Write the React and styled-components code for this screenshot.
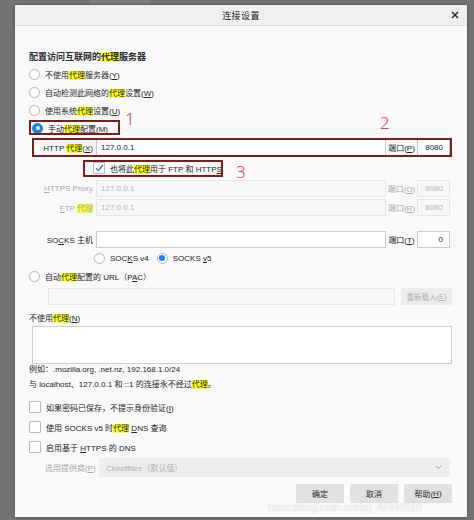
import styled, { createGlobalStyle } from 'styled-components';

const GlobalStyle = createGlobalStyle`
  html, body {
    margin: 0;
    padding: 0;
  }
  body {
    background: #727272;
    font-family: "Liberation Sans", "Noto Sans CJK SC", sans-serif;
  }
`;

const Screen = styled.div`
  position: relative;
  width: 474px;
  height: 520px;
  box-sizing: border-box;
  padding: 0 7px 0 15px;
  background: #727272;
  display: flex;
  flex-direction: column;
  overflow: hidden;
`;

const BackStrip = styled.div`
  height: 5px;
  margin-left: 75px;
  width: 60px;
  background: #7c7c7c;
`;

const Dialog = styled.div`
  width: 452px;
  height: 512px;
  background: #f9f9fa;
  display: flex;
  flex-direction: column;
  box-shadow: 0 0 3px rgba(0, 0, 0, 0.35);
`;

const TitleBar = styled.div`
  height: 20px;
  display: grid;
  grid-template-columns: 1fr auto 1fr;
  align-items: center;
  background: #efeff0;
  border-bottom: 1px solid #dedee0;
  font-size: 9px;
  color: #1b1b1c;
`;

const Title = styled.div`
  grid-column: 2;
  letter-spacing: 0.4px;
`;

const Close = styled.div`
  justify-self: end;
  padding-right: 8px;
  display: flex;
`;

const Body = styled.div`
  flex: 1;
  display: flex;
  flex-direction: column;
  padding: 25px 15px 0 14px;
  font-size: 8px;
  color: #222224;
`;

const Heading = styled.div`
  height: 12px;
  line-height: 12px;
  font-size: 9px;
  font-weight: bold;
  color: #2a2a2e;
  margin-bottom: 2px;
`;

const Hl = styled.span`
  background: #ffff1a;
`;

const OptionRow = styled.div`
  position: relative;
  height: ${(p) => p.$h || 18}px;
  display: flex;
  align-items: center;
  gap: 5px;
  padding-left: ${(p) => p.$indent || 0}px;
  color: ${(p) => (p.$disabled ? '#a8a8aa' : 'inherit')};
`;

const Radio = styled.span`
  width: 11px;
  height: 11px;
  box-sizing: border-box;
  border-radius: 50%;
  border: 1px solid ${(p) => (p.$solid ? '#0a84ff' : '#b5b5b8')};
  background: ${(p) => (p.$solid ? '#0a84ff' : '#fff')};
  display: flex;
  align-items: center;
  justify-content: center;
  flex-shrink: 0;

  &::after {
    content: '';
    width: 4px;
    height: 4px;
    border-radius: 50%;
    background: ${(p) => (p.$solid ? '#fff' : p.$checked ? '#0a84ff' : 'transparent')};
    ${(p) => p.$checked && !p.$solid && 'width: 6px; height: 6px;'}
  }
`;

const Check = styled.span`
  width: 12px;
  height: 12px;
  box-sizing: border-box;
  border: 1px solid #b9b9bc;
  border-radius: 1px;
  background: #fff;
  display: flex;
  align-items: center;
  justify-content: center;
  flex-shrink: 0;
`;

const Annotation = styled.div`
  position: absolute;
  left: ${(p) => p.$left}px;
  top: ${(p) => p.$top}px;
  width: ${(p) => p.$w}px;
  height: ${(p) => p.$h}px;
  border: 2px solid #7e1c1c;
  box-sizing: border-box;
  pointer-events: none;
`;

const Num = styled.div`
  position: absolute;
  left: ${(p) => p.$left}px;
  top: ${(p) => p.$top}px;
  font-family: "Noto Sans", sans-serif;
  font-weight: 300;
  font-size: 17px;
  line-height: 17px;
  color: #e8364f;
`;

const FieldRow = styled.div`
  position: relative;
  height: ${(p) => p.$h || 19}px;
  display: grid;
  grid-template-columns: 67px 290px 31px 33px;
  align-items: center;
  color: ${(p) => (p.$disabled ? '#a8a8aa' : 'inherit')};
`;

const FieldLabel = styled.div`
  text-align: right;
  padding-right: 3px;
  white-space: nowrap;
`;

const PortLabel = styled.div`
  text-align: center;
  white-space: nowrap;
`;

const Input = styled.div`
  height: 17px;
  box-sizing: border-box;
  border: 1px solid ${(p) => (p.$disabled ? '#e6e6e8' : '#c9c9cc')};
  background: ${(p) => (p.$disabled ? '#f7f7f8' : '#fff')};
  color: ${(p) => (p.$disabled ? '#b4b4b6' : '#222224')};
  display: flex;
  align-items: center;
  justify-content: ${(p) => (p.$right ? 'flex-end' : 'flex-start')};
  padding: 0 ${(p) => (p.$right ? 6 : 4)}px 0 ${(p) => (p.$right ? 0 : 4)}px;
  flex: ${(p) => (p.$grow ? 1 : 'none')};
`;

const Gap = styled.div`
  height: ${(p) => p.$h}px;
`;

const Options = styled.div`
  display: flex;
  align-items: center;
  gap: 8px;
`;

const Option = styled.div`
  display: flex;
  align-items: center;
  gap: 5px;
`;

const UrlRow = styled.div`
  height: 19px;
  margin-top: 2px;
  display: flex;
  align-items: center;
  gap: 6px;
  padding-left: 19px;
`;

const SmallButton = styled.div`
  width: 51px;
  height: 17px;
  background: #ececed;
  color: #b0b0b2;
  font-size: 7.5px;
  display: flex;
  align-items: center;
  justify-content: center;
`;

const Caption = styled.div`
  height: ${(p) => p.$h || 12}px;
  line-height: ${(p) => p.$h || 12}px;
  margin-top: ${(p) => p.$mt || 0}px;
  white-space: nowrap;
`;

const TextArea = styled.div`
  height: 38px;
  margin-left: 3px;
  box-sizing: border-box;
  border: 1px solid #cdcdd0;
  background: #fff;
`;

const ProviderRow = styled.div`
  height: 19px;
  margin-top: 1px;
  display: flex;
  align-items: center;
  padding-left: 16px;
  padding-right: 2px;
  color: #a8a8aa;
`;

const ProviderLabel = styled.div`
  width: 54px;
  white-space: nowrap;
`;

const Select = styled.div`
  flex: 1;
  height: 19px;
  background: #ededee;
  color: #b0b0b2;
  display: flex;
  align-items: center;
  justify-content: space-between;
  padding: 0 8px 0 7px;
  box-sizing: border-box;
`;

const Footer = styled.div`
  margin-top: 7px;
  display: flex;
  justify-content: flex-end;
  gap: 6px;
`;

const Button = styled.div`
  width: 48px;
  height: 19px;
  background: #e1e1e3;
  color: #2a2a2e;
  display: flex;
  align-items: center;
  justify-content: center;
`;

const Watermark = styled.div`
  position: absolute;
  left: 268px;
  top: 502px;
  font-size: 10px;
  color: rgba(255, 255, 255, 0.7);
  text-shadow: 0 0 1px rgba(120, 120, 120, 0.35);
  white-space: nowrap;
`;

const CheckMark = () => (
  <svg width="9" height="8" viewBox="0 0 9 8">
    <path d="M1 4.2 L3.4 6.6 L8 1" fill="none" stroke="#2b6fc9" strokeWidth="1.2" />
  </svg>
);

const CloseIcon = () => (
  <svg width="8" height="8" viewBox="0 0 8 8">
    <path d="M1 1 L7 7 M7 1 L1 7" stroke="#222" strokeWidth="1.4" />
  </svg>
);

const Chevron = () => (
  <svg width="7" height="5" viewBox="0 0 7 5">
    <path d="M1 1 L3.5 3.5 L6 1" fill="none" stroke="#9a9a9c" strokeWidth="1" />
  </svg>
);

function App() {
  return (
    <Screen>
      <GlobalStyle />
      <BackStrip />
      <Dialog>
        <TitleBar>
          <Title>连接设置</Title>
          <Close><CloseIcon /></Close>
        </TitleBar>
        <Body>
          <Heading>配置访问互联网的<Hl>代理</Hl>服务器</Heading>
          <OptionRow>
            <Radio />
            <span>不使用<Hl>代理</Hl>服务器(<u>Y</u>)</span>
          </OptionRow>
          <OptionRow>
            <Radio />
            <span>自动检测此网络的<Hl>代理</Hl>设置(<u>W</u>)</span>
          </OptionRow>
          <OptionRow>
            <Radio />
            <span>使用系统<Hl>代理</Hl>设置(<u>U</u>)</span>
          </OptionRow>
          <OptionRow $indent={3}>
            <Radio $solid />
            <span>手动<Hl>代理</Hl>配置(<u>M</u>)</span>
            <Annotation $left={0} $top={1} $w={91} $h={15} />
            <Num $left={96} $top={-9}>1</Num>
          </OptionRow>

          <Gap $h={1} />
          <FieldRow>
            <FieldLabel>HTTP <Hl>代理</Hl>(<u>X</u>)</FieldLabel>
            <Input>127.0.0.1</Input>
            <PortLabel>端口(<u>P</u>)</PortLabel>
            <Input $right>8080</Input>
            <Annotation $left={3} $top={0} $w={420} $h={19} />
            <Num $left={351} $top={-24}>2</Num>
          </FieldRow>
          <OptionRow $h={22} $indent={64}>
            <Check><CheckMark /></Check>
            <span>也将此<Hl>代理</Hl>用于 FTP 和 HTTP<u>S</u></span>
            <Annotation $left={54} $top={3} $w={140} $h={17} />
            <Num $left={207} $top={6}>3</Num>
          </OptionRow>
          <FieldRow $disabled>
            <FieldLabel><u>H</u>TTPS Proxy</FieldLabel>
            <Input $disabled>127.0.0.1</Input>
            <PortLabel>端口(<u>O</u>)</PortLabel>
            <Input $disabled $right>8080</Input>
          </FieldRow>
          <FieldRow $disabled>
            <FieldLabel><u>F</u>TP <Hl>代理</Hl></FieldLabel>
            <Input $disabled>127.0.0.1</Input>
            <PortLabel>端口(<u>R</u>)</PortLabel>
            <Input $disabled $right>8080</Input>
          </FieldRow>
          <Gap $h={13} />
          <FieldRow>
            <FieldLabel>SO<u>C</u>KS 主机</FieldLabel>
            <Input />
            <PortLabel>端口(<u>T</u>)</PortLabel>
            <Input $right>0</Input>
          </FieldRow>
          <OptionRow $indent={65}>
            <Options>
              <Option>
                <Radio />
                <span>SOC<u>K</u>S v4</span>
              </Option>
              <Option>
                <Radio $checked />
                <span>SOCKS <u>v</u>5</span>
              </Option>
            </Options>
          </OptionRow>
          <OptionRow>
            <Radio />
            <span>自动<Hl>代理</Hl>配置的 URL（P<u>A</u>C）</span>
          </OptionRow>
          <UrlRow>
            <Input $disabled $grow />
            <SmallButton>重新载入(<u>E</u>)</SmallButton>
          </UrlRow>
          <Caption $h={14} $mt={6}>不使用<Hl>代理</Hl>(<u>N</u>)</Caption>
          <TextArea />
          <Caption>例如：.mozilla.org, .net.nz, 192.168.1.0/24</Caption>
          <Caption $mt={3}>与 localhost、127.0.0.1 和 ::1 的连接永不经过<Hl>代理</Hl>。</Caption>
          <Gap $h={6} />
          <OptionRow $h={20}>
            <Check />
            <span>如果密码已保存，不提示身份验证(<u>I</u>)</span>
          </OptionRow>
          <OptionRow $h={20}>
            <Check />
            <span>使用 SOCKS v5 时<Hl>代理</Hl> <u>D</u>NS 查询</span>
          </OptionRow>
          <OptionRow $h={20}>
            <Check />
            <span>启用基于 <u>H</u>TTPS 的 DNS</span>
          </OptionRow>
          <ProviderRow>
            <ProviderLabel>选用提供商(<u>P</u>)</ProviderLabel>
            <Select>
              <span>Cloudflare（默认值）</span>
              <Chevron />
            </Select>
          </ProviderRow>
          <Footer>
            <Button>确定</Button>
            <Button>取消</Button>
            <Button>帮助(<u>H</u>)</Button>
          </Footer>
        </Body>
      </Dialog>
      <Watermark>https://blog.csdn.net/qq_42449510</Watermark>
    </Screen>
  );
}

export default App;
